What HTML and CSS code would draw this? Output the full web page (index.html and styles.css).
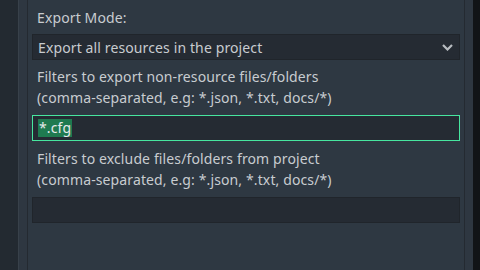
FILE: index.html
```html
<!DOCTYPE html>
<html lang="en">
<head>
    <meta charset="UTF-8">
    <title>Export Resources</title>
    <link rel="stylesheet" href="styles.css">
</head>
<body>
    <div class="layout">
        <div class="side-strip"></div>
        <div class="side-panel"></div>

        <div class="content">
            <div class="field-label">Export Mode:</div>
            <div class="option-button">
                <span>Export all resources in the project</span>
                <svg class="arrow" width="11" height="7" viewBox="0 0 11 7">
                    <path d="M1 1 L5.5 5.5 L10 1" fill="none" stroke="#b8bcc0" stroke-width="2.2"/>
                </svg>
            </div>

            <div class="field-label">
                Filters to export non-resource files/folders<br>
                (comma-separated, e.g: *.json, *.txt, docs/*)
            </div>
            <div class="line-edit focused">
                <span class="selection">*.cfg</span>
            </div>

            <div class="field-label">
                Filters to exclude files/folders from project<br>
                (comma-separated, e.g: *.json, *.txt, docs/*)
            </div>
            <div class="line-edit"></div>
        </div>

        <div class="side-panel right"></div>
        <div class="dark-area"></div>
    </div>
</body>
</html>
```

FILE: styles.css
```css
* {
    margin: 0;
    padding: 0;
    box-sizing: border-box;
}

body {
    font-family: 'Noto Sans', 'Open Sans', sans-serif;
    font-size: 14px;
    letter-spacing: 0.12px;
    background: #111417;
    color: #c8ccd0;
    width: 480px;
    height: 270px;
    overflow: hidden;
}

.layout {
    display: flex;
    height: 270px;
}

.side-strip {
    width: 19px;
    background: #232a31;
    border-right: 1px solid #38414a;
}

.side-panel {
    width: 9px;
    background: #2e3741;
    border-right: 1px solid #242a31;
}

.side-panel.right {
    border-right: none;
    border-left: 1px solid #242a31;
}

.content {
    width: 436px;
    background: #2e3842;
    padding: 7px 4px 0 4px;
}

.dark-area {
    flex: 1;
    background: #111417;
}

.field-label {
    line-height: 21px;
    padding-left: 5px;
    margin-bottom: 7px;
}

.option-button {
    height: 26px;
    background: #252b33;
    border: 1px solid #20252b;
    display: flex;
    align-items: center;
    justify-content: space-between;
    padding: 0 6px 0 5px;
    margin-top: -1px;
    margin-bottom: 6px;
}

.line-edit {
    height: 26px;
    background: #252b33;
    border: 1px solid #20252b;
    display: flex;
    align-items: center;
    padding-left: 5px;
    margin-bottom: 7px;
}

.line-edit.focused {
    border-color: #47e69f;
}

.selection {
    background: #1f7a50;
    color: #e6eaec;
    line-height: 18px;
    padding: 0 1px;
}
```
